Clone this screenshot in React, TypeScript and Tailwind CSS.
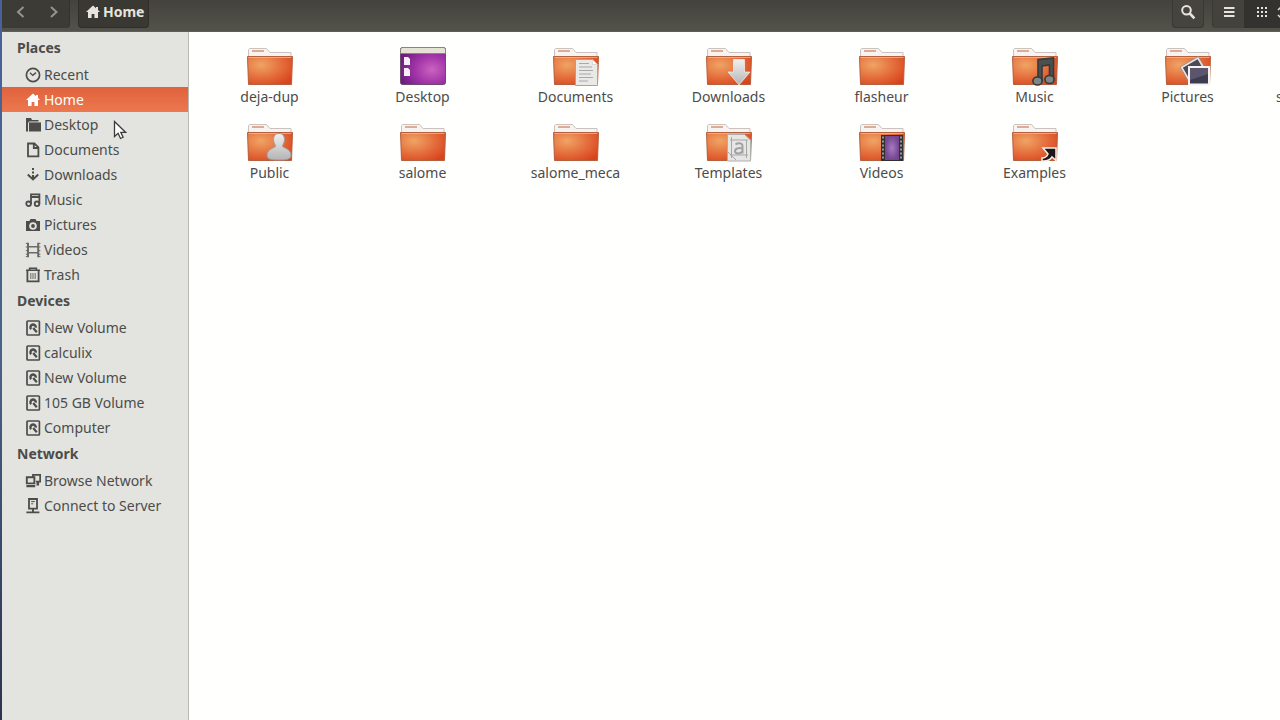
import type { ReactNode } from 'react'

type IconName =
  | 'recent' | 'home' | 'desktop' | 'document' | 'download' | 'music'
  | 'camera' | 'video' | 'trash' | 'disk' | 'network' | 'server'

interface Place {
  label: string
  icon: IconName
}

interface Section {
  title: string
  items: Place[]
}

const SECTIONS: Section[] = [
  {
    title: 'Places',
    items: [
      { label: 'Recent', icon: 'recent' },
      { label: 'Home', icon: 'home' },
      { label: 'Desktop', icon: 'desktop' },
      { label: 'Documents', icon: 'document' },
      { label: 'Downloads', icon: 'download' },
      { label: 'Music', icon: 'music' },
      { label: 'Pictures', icon: 'camera' },
      { label: 'Videos', icon: 'video' },
      { label: 'Trash', icon: 'trash' },
    ],
  },
  {
    title: 'Devices',
    items: [
      { label: 'New Volume', icon: 'disk' },
      { label: 'calculix', icon: 'disk' },
      { label: 'New Volume', icon: 'disk' },
      { label: '105 GB Volume', icon: 'disk' },
      { label: 'Computer', icon: 'disk' },
    ],
  },
  {
    title: 'Network',
    items: [
      { label: 'Browse Network', icon: 'network' },
      { label: 'Connect to Server', icon: 'server' },
    ],
  },
]

const GLYPHS: Record<IconName, ReactNode> = {
  recent: (
    <g fill="none" stroke="currentColor">
      <circle cx="8" cy="8" r="6.6" strokeWidth="1.7" />
      <path d="M5 5.8 7.8 8.4 11 5.6" strokeWidth="1.4" />
    </g>
  ),
  home: <path fill="currentColor" d="M8 1.5 1 8h2v6h3.6v-4h2.8v4H13V8h2l-2-1.9V3h-2v1.3z" />,
  desktop: (
    <g fill="currentColor">
      <path d="M1 1h5l1 2h6.5v1.6H4.2L3 6v8.5H1z" />
      <path d="M4 5.4h12v9.1H4z" />
    </g>
  ),
  document: <path fill="none" stroke="currentColor" strokeWidth="1.8" d="M3 1.5h6.4L13.4 5.4v9H3zM8.8 2v4h4" />,
  download: (
    <g fill="none" stroke="currentColor" strokeWidth="2">
      <path d="M8 1v2M8 4.5v2M8 8v3.5" />
      <path d="M2.8 7.6 8 12.4l5.2-4.8" />
    </g>
  ),
  music: (
    <g fill="none" stroke="currentColor" strokeWidth="1.8">
      <circle cx="3.6" cy="11.8" r="2.3" />
      <circle cx="12" cy="11.8" r="2.3" />
      <path d="M6 12V2.3h8.4V12M6 5h8.4" />
    </g>
  ),
  camera: (
    <g fill="currentColor">
      <path fillRule="evenodd" d="M1 4h3.5l1-2h5l1 2H15v10H1zm7 1.200a3.800 3.800 0 1 0 0 7.600 3.800 3.800 0 0 0 0-7.600z" />
      <circle cx="8" cy="9" r="1.9" />
    </g>
  ),
  video: (
    <g fill="none" stroke="currentColor" opacity="0.8">
      <path d="M3 .8v14.400M13.200.8v14.400" strokeWidth="2" />
      <path d="M3 4.800h10.200M3 10.800h10.200" strokeWidth="1.4" />
      <path d="M.8 1.400h2M.8 5h2M.8 8.600h2M.8 12.200h2M.8 14.600h2M13.400 1.400h2M13.400 5h2M13.400 8.600h2M13.400 12.200h2M13.400 14.600h2" />
    </g>
  ),
  trash: (
    <g fill="none" stroke="currentColor">
      <path d="M1 3.200h14M4.600 3V1.200h6.800V3" strokeWidth="1.6" />
      <path d="M2.400 4v10.400h11.200V4" strokeWidth="1.8" />
      <path d="M5.800 6v6M8 6v6M10.200 6v6" strokeWidth="1.2" opacity="0.7" />
    </g>
  ),
  disk: (
    <g fill="none" stroke="currentColor">
      <rect x="2" y="1" width="12.4" height="14" rx="0.8" strokeWidth="1.7" />
      <path d="M6.200 9.200A2.700 2.700 0 1 1 10.800 7.600" strokeWidth="2.4" />
      <path d="M8.200 8l3.600 4.200" strokeWidth="2.2" />
    </g>
  ),
  network: (
    <g fill="none" stroke="currentColor">
      <path d="M8 4V1.800h7.200v6.800H11" strokeWidth="1.8" />
      <path d="M1.800 4.200h7.600v6.200H1.800z" strokeWidth="1.9" />
      <path d="M1.400 13.200h8.800M13 8.600v2.800h-1.600" strokeWidth="2.2" />
    </g>
  ),
  server: (
    <g fill="none" stroke="currentColor">
      <path d="M4 1h8v9.600H4z" strokeWidth="1.8" />
      <path d="M6.200 3.600h3.600M6.200 5.800h2" />
      <path d="M8 10.600V14M1.400 14.400h13" strokeWidth="1.9" />
    </g>
  ),
}

function PlaceIcon({ name }: { name: IconName }) {
  return (
    <svg viewBox="0 0 16 16" className="size-4 shrink-0" aria-hidden="true">
      {GLYPHS[name]}
    </svg>
  )
}

// Emblems are drawn over the folder in its 48x42 box
const EMBLEMS: Record<string, ReactNode> = {
  Documents: (
    <g>
      <path d="M23.5 14.5h17l5 5v21h-22z" fill="#e9e9e7" stroke="#a8a39e" />
      <path d="M40.5 14.5v5h5z" fill="#fff" stroke="#c4c0bc" strokeWidth="0.5" />
      <path d="M27 18.5h10M27 22h13M27 25.5h14M27 29h12M27 32.5h14M27 36h9" stroke="#a9a9a9" />
    </g>
  ),
  Downloads: (
    <path d="M28.5 14.5h11v12.5h5.5L34 40 23 27h5.5z" fill="url(#silver)" stroke="#fff" strokeOpacity="0.6" />
  ),
  Music: (
    <g stroke="#353a3a" strokeWidth="1.6">
      <path d="M27 14.500 42.500 13V34H38.500V20L31 21V36H27z" fill="#4a5050" />
      <ellipse cx="26.500" cy="36" rx="4.600" ry="4" fill="#7d8785" />
      <ellipse cx="38.500" cy="34.500" rx="4.600" ry="4" fill="#7d8785" />
    </g>
  ),
  Pictures: (
    <g>
      <rect x="20.500" y="16.500" width="19" height="17" transform="rotate(-30 30 25)" fill="#4d4a58" stroke="#e6e2e0" strokeWidth="2" />
      <rect x="19.500" y="15.500" width="21" height="19" transform="rotate(-30 30 25)" fill="none" stroke="#8c8684" strokeWidth="0.6" />
      <path d="M25 22h20v17.500H25z" fill="#3f3b50" stroke="#f6f4f2" strokeWidth="2" />
      <path d="M26 23h18v6L26 35z" fill="#77728c" opacity="0.5" />
    </g>
  ),
  Public: (
    <path
      d="M33 12.500c4 0 5.500 3 5.500 6 0 3-1.500 5-2 6.500 0 2 8.500 2.500 8.500 9 0 3-1 5-12 5s-12-2-12-5c0-6.500 8.500-7 8.500-9-.5-1.500-2-3.500-2-6.500 0-3 1.500-6 5.500-6z"
      fill="url(#silver)"
      stroke="#9d9a97"
    />
  ),
  Templates: (
    <g>
      <path d="M22.500 13.500h17l6 5.500v21H22.500z" fill="#e6e6e5" stroke="#b2aeaa" />
      <path d="M25 19h18M25 34h18M26.500 16v21M41.500 19v18M23 31l8 8" stroke="#a7a7a7" fill="none" />
      <path
        d="M30.500 23.500c2-1.800 7-1.800 7 1.500v7.500m0-5c-4-1-7.500 0-7.500 2.600 0 3 5.500 3.400 7.500 0"
        fill="none"
        stroke="#a2a2a2"
        strokeWidth="2"
      />
    </g>
  ),
  Videos: (
    <g>
      <path d="M23 14h22v26H23z" fill="#303030" />
      <path d="M27 15h14v24H27z" fill="url(#film)" />
      <path d="M25 15.500v24M43 15.500v24" stroke="#b5b0b4" strokeWidth="1.6" strokeDasharray="2 2" />
    </g>
  ),
  Examples: (
    <path
      d="M32 27h13v12.500l-4-3.500c-2 3-5 4.500-10 4v-3c3 0 5-1.500 6-4z"
      fill="#1c1715"
      stroke="#f5eee9"
      strokeWidth="1.5"
    />
  ),
}

const FILES = [
  'deja-dup', 'Desktop', 'Documents', 'Downloads', 'flasheur', 'Music', 'Pictures', 's',
  'Public', 'salome', 'salome_meca', 'Templates', 'Videos', 'Examples',
]

function IconDefs() {
  return (
    <svg className="absolute size-0" aria-hidden="true">
      <defs>
        <radialGradient id="folder" cx="0.3" cy="0.3" r="0.85">
          <stop offset="0" stopColor="#f0a463" />
          <stop offset="0.5" stopColor="#e57240" />
          <stop offset="1" stopColor="#d8431c" />
        </radialGradient>
        <linearGradient id="silver" x1="0" y1="0" x2="0" y2="1">
          <stop offset="0" stopColor="#f0f0f0" />
          <stop offset="1" stopColor="#b4b4b4" />
        </linearGradient>
        <radialGradient id="film">
          <stop offset="0" stopColor="#a77ac0" />
          <stop offset="1" stopColor="#754691" />
        </radialGradient>
        <radialGradient id="wallpaper" cx="0.7" cy="0.6" r="0.75">
          <stop offset="0" stopColor="#cb63c0" />
          <stop offset="0.5" stopColor="#a234a8" />
          <stop offset="1" stopColor="#6b1c7d" />
        </radialGradient>
      </defs>
    </svg>
  )
}

function FileIcon({ name }: { name: string }) {
  if (name === 'Desktop') {
    return (
      <svg viewBox="0 0 48 42" className="h-[42px] w-12" aria-hidden="true">
        <rect x="1.5" y="2.5" width="45" height="37" rx="2" fill="url(#wallpaper)" stroke="#6c4b6e" />
        <path d="M3 2.500h42l1.500 1.500v4.500h-45V4z" fill="#e4e3d3" stroke="#8b8478" />
        <path d="M5 12h4l2 2v6H5zM5 23h4l2 2v6H5z" fill="#f7f0f8" />
      </svg>
    )
  }
  return (
    <svg viewBox="0 0 48 42" className="h-[42px] w-12" aria-hidden="true">
      <path d="M2.500 38V4.500l1-1h17l3.500 4h21v30z" fill="#f6f3f1" stroke="#c9c2be" />
      <path d="M6 6h12" stroke="#dca38a" strokeWidth="1.8" />
      <path d="M1.500 11.500h45L45.500 39.500h-43z" fill="url(#folder)" stroke="#b5603f" strokeLinejoin="round" />
      <path d="M2.500 12.500h43" stroke="#f6bd95" opacity="0.7" />
      {EMBLEMS[name]}
    </svg>
  )
}

function Chevron({ d }: { d: string }) {
  return (
    <svg viewBox="0 0 16 14" className="h-3.5 w-4" fill="none" stroke="currentColor" strokeWidth="2" aria-hidden="true">
      <path d={d} />
    </svg>
  )
}

function Toolbar() {
  return (
    <header className="flex h-8 shrink-0 items-start justify-between border-b border-[#5f5e57] bg-linear-to-b from-[#43423c] to-[#53524b] text-[#e6e4dd]">
      <div className="flex">
        <button aria-label="Back" className="flex h-7 w-8 items-center justify-center bg-[#3c3b36] pb-1 pl-1.5 text-[#96958d]">
          <Chevron d="M10.5 2 5 7l5.500 5" />
        </button>
        <button aria-label="Forward" className="mr-2 flex h-7 w-9 items-center justify-center rounded-br border-r border-[#33322e] bg-[#3c3b36] pb-1 pl-1 text-[#96958d]">
          <Chevron d="M5 2l5.500 5L5 12" />
        </button>
        <button className="flex h-7 items-center gap-0.5 rounded-b border border-t-0 border-[#2f2e2a] bg-[#393833] pr-1 pb-1 pl-1.5 text-sm font-bold">
          <PlaceIcon name="home" />
          Home
        </button>
      </div>
      <div className="flex">
        <button aria-label="Search" className="mr-2 flex h-7 w-8 items-center justify-center rounded-b border border-t-0 border-[#393833] bg-[#45443e] pb-1">
          <svg viewBox="0 0 16 16" className="size-4" fill="none" stroke="currentColor" aria-hidden="true">
            <circle cx="6.5" cy="6.2" r="4.3" strokeWidth="2" />
            <path d="M9.800 9.500l4.600 4.800" strokeWidth="2.6" />
          </svg>
        </button>
        <button aria-label="List view" className="flex h-7 w-8 items-center justify-center rounded-bl border-l border-[#393833] bg-[#43423c] pb-1">
          <svg viewBox="0 0 16 16" className="size-4" stroke="currentColor" strokeWidth="2" aria-hidden="true">
            <path d="M3 4h10.500M3 8h10.500M3 12h10.500" />
          </svg>
        </button>
        <button aria-label="Icon view" className="flex h-7 w-9 items-center gap-1 overflow-hidden bg-[#33322e] pb-1 pl-3">
          <svg viewBox="0 0 16 16" className="size-4 shrink-0" stroke="currentColor" strokeWidth="2" strokeDasharray="2 2" aria-hidden="true">
            <path d="M1 4h10.500M1 8h10.500M1 12h10.500" />
          </svg>
          <svg viewBox="0 0 8 16" className="h-4 w-2 shrink-0" fill="none" stroke="currentColor" strokeWidth="1.5" aria-hidden="true">
            <path d="M2 6l3-3 3 3M2 11l3 3 3-3" />
          </svg>
        </button>
      </div>
    </header>
  )
}

function Sidebar() {
  return (
    <nav className="w-[187px] shrink-0 border-r border-[#b9bab6] bg-[#e3e4df] pt-0.5">
      {SECTIONS.map(section => (
        <section key={section.title}>
          <h2 className="pl-[15px] text-sm leading-7 font-bold">{section.title}</h2>
          <ul>
            {section.items.map((item, i) => (
              <li key={i}>
                <a
                  href="#"
                  className={
                    item.label === 'Home'
                      ? 'flex h-[25px] items-center gap-[3px] bg-linear-to-b from-[#e0623c] to-[#ec7850] pl-[23px] text-white'
                      : 'flex h-[25px] items-center gap-[3px] pl-[23px]'
                  }
                >
                  <PlaceIcon name={item.icon} />
                  {item.label}
                </a>
              </li>
            ))}
          </ul>
        </section>
      ))}
    </nav>
  )
}

export default function App() {
  return (
    <div className="relative flex h-screen overflow-hidden bg-[#fffffe] font-['Noto_Sans','Open_Sans',sans-serif] text-sm text-[#4c4c4a]">
      <IconDefs />

      {/* Strip of desktop behind the window */}
      <div className="w-0.5 shrink-0 bg-linear-to-b from-[#46629a] via-[#4a6288] to-[#2c3350]" />

      <div className="flex min-w-0 flex-1 flex-col">
        <Toolbar />
        <div className="flex min-h-0 flex-1">
          <Sidebar />
          <main className="min-w-0 flex-1 overflow-hidden pt-[13px] pl-1">
            <ul className="grid grid-cols-[repeat(8,153px)] gap-y-3.5">
              {FILES.map(name => (
                <li
                  key={name}
                  className={name === 's' ? 'flex flex-col items-start pl-3' : 'flex flex-col items-center'}
                >
                  {name === 's' ? <span className="h-[42px]" /> : <FileIcon name={name} />}
                  <span className="leading-5">{name}</span>
                </li>
              ))}
            </ul>
          </main>
        </div>
      </div>

      {/* Mouse pointer */}
      <svg viewBox="0 0 14 20" className="pointer-events-none absolute top-[120px] left-[113px] h-5 w-3.5" aria-hidden="true">
        <path d="M1.500 1.500v15l3.600-3.200 2.400 5.200 2.600-1.200-2.300-5h4.700z" fill="#fff" stroke="#3a3a3a" strokeWidth="1.3" />
      </svg>
    </div>
  )
}
